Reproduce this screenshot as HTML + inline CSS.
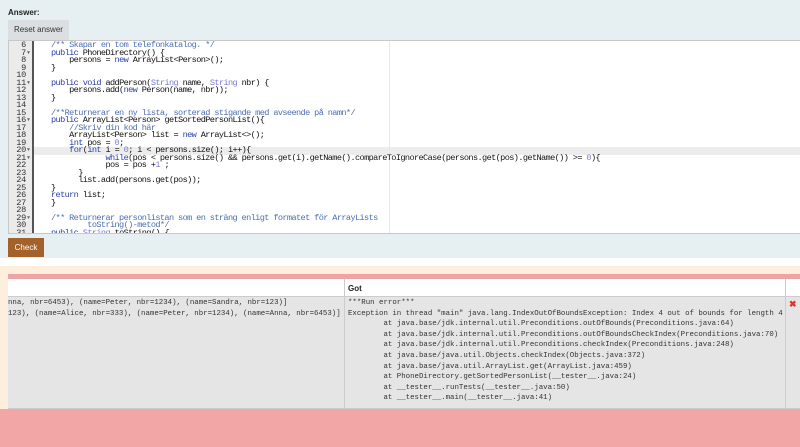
<!DOCTYPE html>
<html><head><meta charset="utf-8">
<style>
*{margin:0;padding:0;box-sizing:border-box}
body{width:800px;height:447px;overflow:hidden;background:#e6f0f2;font-family:"Liberation Sans",sans-serif;position:relative}
.lbl{position:absolute;left:8px;top:8px;font-size:8px;font-weight:bold;color:#222}
.reset{position:absolute;left:8px;top:20px;width:61px;height:20px;background:#dcdfe2;font-size:8px;color:#333;line-height:20px;text-align:center}
.ed{position:absolute;left:8px;top:40px;width:792px;height:194px;background:#fff;border:1px solid #c8c8c8;border-right:none;overflow:hidden}
.gut{position:absolute;left:0;top:0;width:25px;height:100%;background:#ebebeb;border-right:2px solid #555}
.code,.nums{position:absolute;top:1px;font-family:"Liberation Mono",monospace;font-size:8.6px;line-height:7.5px;letter-spacing:-0.62px;white-space:pre}
.nums{left:0;width:17px;text-align:right;color:#333;letter-spacing:-0.3px}
.nums span.f{position:absolute;left:18px;font-size:5px;color:#666}
.code{left:42px;color:#111}
.hl{position:absolute;left:25px;right:0;top:106px;height:7.5px;background:#ececec}
.pm{position:absolute;left:380px;top:0;bottom:0;width:1px;background:#e8e8e8}
.c{color:#4d6fb1}.k{color:#2a3fa8}.n{color:#7a7ad0}
.check{position:absolute;left:8px;top:238px;width:36px;height:19px;background:#a4622a;color:#fff;font-size:8px;line-height:19px;text-align:center}
.white{position:absolute;left:0;top:258px;width:800px;height:8px;background:#fff}
.res{position:absolute;left:0;top:266px;width:800px;height:181px;background:#f2a6a6}
.peach{position:absolute;left:0;top:266px;width:800px;height:8px;background:#fdeedd}
.peachl{position:absolute;left:0;top:266px;width:8px;height:143px;background:#fdeedd}
.red{position:absolute;left:8px;top:274px;width:792px;height:5px;background:#eea4a4}
.th{position:absolute;left:8px;top:279px;width:792px;height:18px;background:#fff;border-bottom:1px solid #ccc}
.tb{position:absolute;left:8px;top:297px;width:792px;height:112px;background:#e5e5e5;border-bottom:1px solid #ccc}
.v1{position:absolute;left:344px;top:279px;width:1px;height:130px;background:#ccc}
.v2{position:absolute;left:785px;top:279px;width:1px;height:130px;background:#ccc}
.got{position:absolute;left:348px;top:284px;font-size:8px;font-weight:bold;color:#222}
.mono{position:absolute;font-family:"Liberation Mono",monospace;font-size:7.4px;line-height:10.6px;white-space:pre;color:#333}
.x{position:absolute;left:789px;top:299px;color:#d33;font-size:9px;font-weight:bold}
</style></head><body>
<div class="lbl">Answer:</div>
<div class="reset">Reset answer</div>
<div class="ed">
<div class="gut"></div>
<div class="hl"></div>
<div class="pm"></div>
<div class="nums">6
7<span class="f">▼</span>
8
9
10
11<span class="f">▼</span>
12
13
14
15
16<span class="f">▼</span>
17
18
19
20<span class="f">▼</span>
21<span class="f">▼</span>
22
23
24
25
26
27
28
29<span class="f">▼</span>
30
31</div>
<div class="code"><span class="c">/** Skapar en tom telefonkatalog. */</span>
<span class="k">public</span> PhoneDirectory() {
    persons = <span class="k">new</span> ArrayList&lt;Person&gt;();
}

<span class="k">public void</span> addPerson(<span class="n">String</span> name, <span class="n">String</span> nbr) {
    persons.add(<span class="k">new</span> Person(name, nbr));
}

<span class="c">/**Returnerar en ny lista, sorterad stigande med avseende på namn*/</span>
<span class="k">public</span> ArrayList&lt;Person&gt; getSortedPersonList(){
    <span class="c">//Skriv din kod här</span>
    ArrayList&lt;Person&gt; list = <span class="k">new</span> ArrayList&lt;&gt;();
    <span class="k">int</span> pos = <span class="n">0</span>;
    <span class="k">for</span>(<span class="k">int</span> i = <span class="n">0</span>; i &lt; persons.size(); i++){
            <span class="k">while</span>(pos &lt; persons.size() &amp;&amp; persons.get(i).getName().compareToIgnoreCase(persons.get(pos).getName()) &gt;= <span class="n">0</span>){
            pos = pos +<span class="n">1</span> ;
      }
      list.add(persons.get(pos));
}
<span class="k">return</span> list;
}

<span class="c">/** Returnerar personlistan som en sträng enligt formatet för ArrayLists
        toString()-metod*/</span>
<span class="k">public</span> <span class="n">String</span> toString() {</div>
</div>
<div class="check">Check</div>
<div class="white"></div>
<div class="res"></div>
<div class="peach"></div>
<div class="peachl"></div>
<div class="red"></div>
<div class="th"></div>
<div class="tb"></div>
<div class="v1"></div>
<div class="v2"></div>
<div class="got">Got</div>
<div class="mono" style="left:8px;top:298px">nna, nbr=6453), (name=Peter, nbr=1234), (name=Sandra, nbr=123)]
123), (name=Alice, nbr=333), (name=Peter, nbr=1234), (name=Anna, nbr=6453)]</div>
<div class="mono" style="left:348px;top:298px">***Run error***
Exception in thread "main" java.lang.IndexOutOfBoundsException: Index 4 out of bounds for length 4
        at java.base/jdk.internal.util.Preconditions.outOfBounds(Preconditions.java:64)
        at java.base/jdk.internal.util.Preconditions.outOfBoundsCheckIndex(Preconditions.java:70)
        at java.base/jdk.internal.util.Preconditions.checkIndex(Preconditions.java:248)
        at java.base/java.util.Objects.checkIndex(Objects.java:372)
        at java.base/java.util.ArrayList.get(ArrayList.java:459)
        at PhoneDirectory.getSortedPersonList(__tester__.java:24)
        at __tester__.runTests(__tester__.java:50)
        at __tester__.main(__tester__.java:41)</div>
<div class="x">✖</div>
</body></html>
